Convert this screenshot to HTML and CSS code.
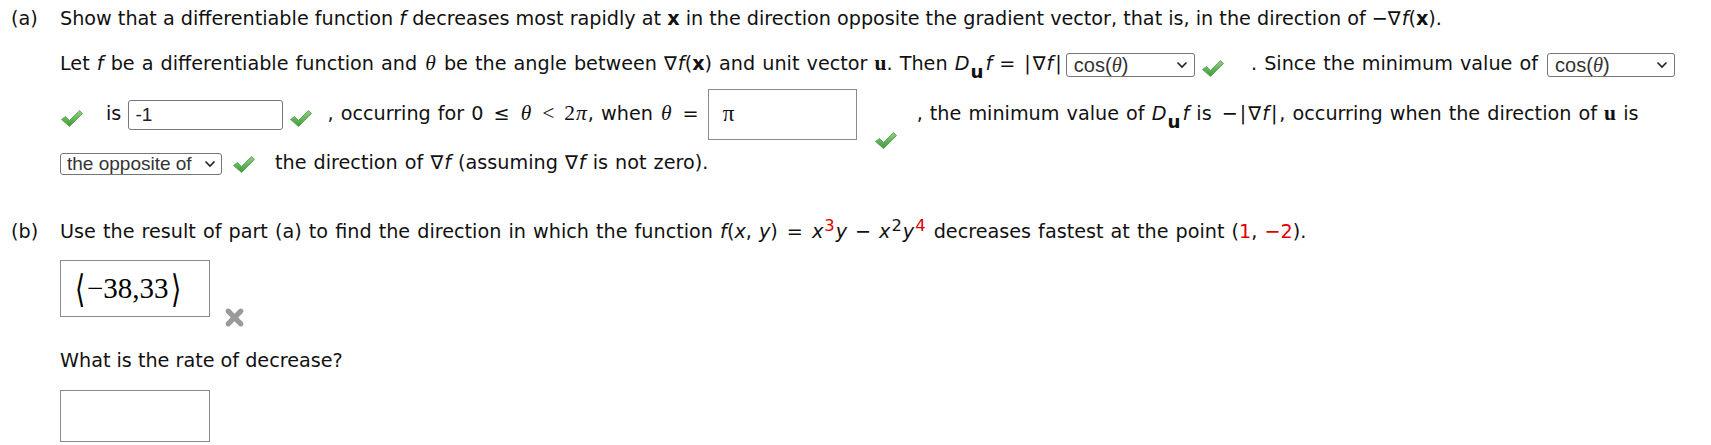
FILE: index.html
```html
<!DOCTYPE html>
<html>
<head>
<meta charset="utf-8">
<link rel="stylesheet" href="styles.css">
</head>
<body>
<svg width="0" height="0" class="defs">
  <defs>
    <linearGradient id="gck" x1="0" y1="0" x2="0" y2="1">
      <stop offset="0" stop-color="#8fd17f"/>
      <stop offset="1" stop-color="#3f9a3a"/>
    </linearGradient>
    <symbol id="ck" viewBox="0 0 24 20">
      <path d="M1.5 11.5 L5.5 8.5 L9.5 12.5 L19.5 2.5 L22.5 5.5 L9.5 18.5 Z" fill="url(#gck)" stroke="#4a9e44" stroke-width="0.8" stroke-linejoin="round"/>
    </symbol>
    <symbol id="chev" viewBox="0 0 12 8">
      <path d="M1.5 1.5 L6 6 L10.5 1.5" fill="none" stroke="#222" stroke-width="1.6"/>
    </symbol>
  </defs>
</svg>

<div class="q">
  <div class="lbl">(a)</div>
  <div class="content">
    <div class="row r1">Show that a differentiable function <i>f</i> decreases most rapidly at <b>x</b> in the direction opposite the gradient vector, that is, in the direction of −<span class="nab">∇</span><i>f</i>(<b>x</b>).</div>
    <div class="row r2 ws">Let <i>f</i> be a differentiable function and <span class="mj">θ</span> be the angle between <span class="nab">∇</span><i>f</i>(<b>x</b>) and unit vector <b class="mb">u</b>. Then <i>D</i><span class="sub">u</span><i>f</i><span class="rel">=</span><span class="bar">|</span><span class="nab">∇</span><i>f</i><span class="bar">|</span><span class="sel s-cos"><span class="opt">cos(<span class="mj">θ</span>)</span><svg class="chev"><use href="#chev"/></svg></span><svg class="check c2"><use href="#ck"/></svg> . Since the minimum value of <span class="sel s-cos2"><span class="opt">cos(<span class="mj">θ</span>)</span><svg class="chev"><use href="#chev"/></svg></span></div>
    <div class="row r3 ws"><svg class="check c3a"><use href="#ck"/></svg>is <span class="inp">-1</span><svg class="check c3b"><use href="#ck"/></svg>, occurring for 0<span class="rel">≤</span><span class="mj">θ</span><span class="rel mjr">&lt;</span><span class="mjr">2</span><span class="mj">π</span>, when <span class="mj">θ</span><span class="rel">=</span><span class="pibox">π</span><svg class="check c3c"><use href="#ck"/></svg>, the minimum value of <i>D</i><span class="sub">u</span><i>f</i> is <span class="neg">−</span><span class="bar">|</span><span class="nab">∇</span><i>f</i><span class="bar">|</span>, occurring when the direction of <b class="mb">u</b> is</div>
    <div class="row r4 ws"><span class="sel s-opp"><span class="opt">the opposite of</span><svg class="chev"><use href="#chev"/></svg></span><svg class="check c4"><use href="#ck"/></svg>the direction of <span class="nab">∇</span><i>f</i> (assuming <span class="nab">∇</span><i>f</i> is not zero).</div>
  </div>
</div>

<div class="q qb">
  <div class="lbl">(b)</div>
  <div class="content">
    <div class="row rb ws">Use the result of part (a) to find the direction in which the function <i>f</i>(<i>x</i>, <i>y</i>)<span class="rel">=</span><i>x</i><sup class="red">3</sup><i>y</i><span class="bin">−</span><i>x</i><sup>2</sup><i>y</i><sup class="red">4</sup> decreases fastest at the point (<span class="red">1</span>, <span class="red">−2</span>).</div>
    <div class="ansrow">
      <div class="ans"><span class="tex"><span class="ang">⟨</span>−38,33<span class="ang">⟩</span></span></div>
      <svg class="xmark" viewBox="0 0 20 20"><path d="M4 4 L16 16 M16 4 L4 16" stroke="#9a9a9a" stroke-width="5" stroke-linecap="round"/></svg>
    </div>
    <div class="row rw">What is the rate of decrease?</div>
    <div class="ans empty"></div>
  </div>
</div>
</body>
</html>
```

FILE: styles.css
```css
html, body {
  margin: 0;
  padding: 0;
  background: #fff;
}
body {
  font-family: "DejaVu Sans", Verdana, sans-serif;
  font-size: 19.2px;
  color: #111;
}
.defs {
  position: absolute;
  width: 0;
  height: 0;
}
.q {
  display: flex;
}
.lbl {
  width: 60px;
  padding-left: 11px;
  box-sizing: border-box;
  line-height: 38px;
  height: 38px;
  flex: none;
}
.qb {
  margin-top: 24px;
}
.qb .lbl {
  line-height: 42px;
  height: 42px;
}
.content {
  flex: 1;
}
.row {
  white-space: nowrap;
}
.ws {
  word-spacing: 1px;
}
.r1 {
  height: 38px;
  line-height: 38px;
}
.r2 {
  height: 50px;
  line-height: 50px;
}
.r3 {
  height: 51px;
  line-height: 51px;
}
.r4 {
  height: 48px;
  line-height: 48px;
}
.rb {
  height: 42px;
  line-height: 42px;
}
.rw {
  height: 44px;
  line-height: 44px;
  margin-top: 22px;
}
.mj {
  font-family: "Liberation Serif", "DejaVu Serif", serif;
  font-style: italic;
  font-size: 1.12em;
  margin: 0 1px;
}
.mjr {
  font-family: "Liberation Serif", "DejaVu Serif", serif;
  font-size: 1.12em;
}
.mb {
  font-family: "Liberation Serif", "DejaVu Serif", serif;
  font-weight: bold;
  font-size: 1.12em;
}
.nab {
  margin-right: 1px;
}
.rel {
  margin: 0 7px;
}
.r3 .rel {
  margin: 0 10px;
}
.rb .rel {
  margin: 0 9px;
}
.bin {
  margin: 0 8px;
}
.neg {
  margin-left: 3px;
}
.bar {
  margin: 0 2px;
}
.sub {
  font-weight: bold;
  font-size: 0.95em;
  position: relative;
  top: 8px;
  margin: 0 2px 0 1px;
}
.red {
  color: #e00000;
}
sup {
  font-size: 0.85em;
  vertical-align: 0.45em;
  line-height: 0;
  margin: 0 1px;
}
.sel {
  display: inline-flex;
  align-items: center;
  justify-content: space-between;
  box-sizing: border-box;
  height: 24px;
  border: 1px solid #767676;
  border-radius: 3px;
  padding: 0 6px 0 7px;
  font-family: "Liberation Sans", Arial, sans-serif;
  font-size: 20px;
  color: #333;
  vertical-align: middle;
  line-height: 22px;
  background: #fff;
  word-spacing: 0;
}
.sel .mj {
  font-size: 1.02em;
  margin: 0;
}
.s-cos {
  width: 129px;
  margin-left: 2px;
}
.s-cos2 {
  width: 128px;
  margin-left: 2px;
}
.s-opp {
  width: 162px;
  height: 22px;
  padding: 0 5px 0 6px;
  font-size: 19px;
}
.chev {
  width: 12px;
  height: 8px;
}
.check {
  width: 24px;
  height: 20px;
  vertical-align: -8px;
}
.c2 {
  margin: 0 19px 0 6px;
}
.c3a {
  margin-right: 22px;
}
.c3b {
  margin: 0 14px 0 6px;
}
.c3c {
  margin: 0 19px 0 17px;
  vertical-align: -30px;
}
.c4 {
  margin: 0 19px 0 10px;
  vertical-align: -5px;
}
.inp {
  display: inline-block;
  box-sizing: border-box;
  width: 155px;
  height: 30px;
  border: 1px solid #767676;
  border-radius: 3px;
  padding-left: 6px;
  font-family: "Liberation Sans", Arial, sans-serif;
  font-size: 19px;
  line-height: 28px;
  vertical-align: middle;
  color: #222;
}
.pibox {
  display: inline-block;
  box-sizing: border-box;
  width: 149px;
  height: 51px;
  border: 1px solid #8a8a8a;
  padding-left: 14px;
  font-family: "Liberation Serif", "DejaVu Serif", serif;
  font-size: 23px;
  line-height: 48px;
  vertical-align: middle;
  margin-left: -1px;
}
.ansrow {
  display: flex;
  align-items: flex-end;
  margin-top: 7px;
}
.ans {
  box-sizing: border-box;
  width: 150px;
  height: 57px;
  border: 1px solid #8a8a8a;
  display: flex;
  align-items: center;
  padding-left: 12px;
}
.tex {
  font-family: "Liberation Serif", "DejaVu Serif", serif;
  font-size: 29px;
  color: #000;
  display: flex;
  align-items: center;
}
.ang {
  font-family: "DejaVu Sans", sans-serif;
  font-weight: 200;
  font-size: 26px;
  display: inline-block;
  transform: scaleY(1.45);
  margin: 0 2px;
}
.xmark {
  width: 21px;
  height: 21px;
  margin-left: 14px;
  margin-bottom: -11px;
}
.empty {
  margin-top: 7px;
  height: 52px;
}
```
